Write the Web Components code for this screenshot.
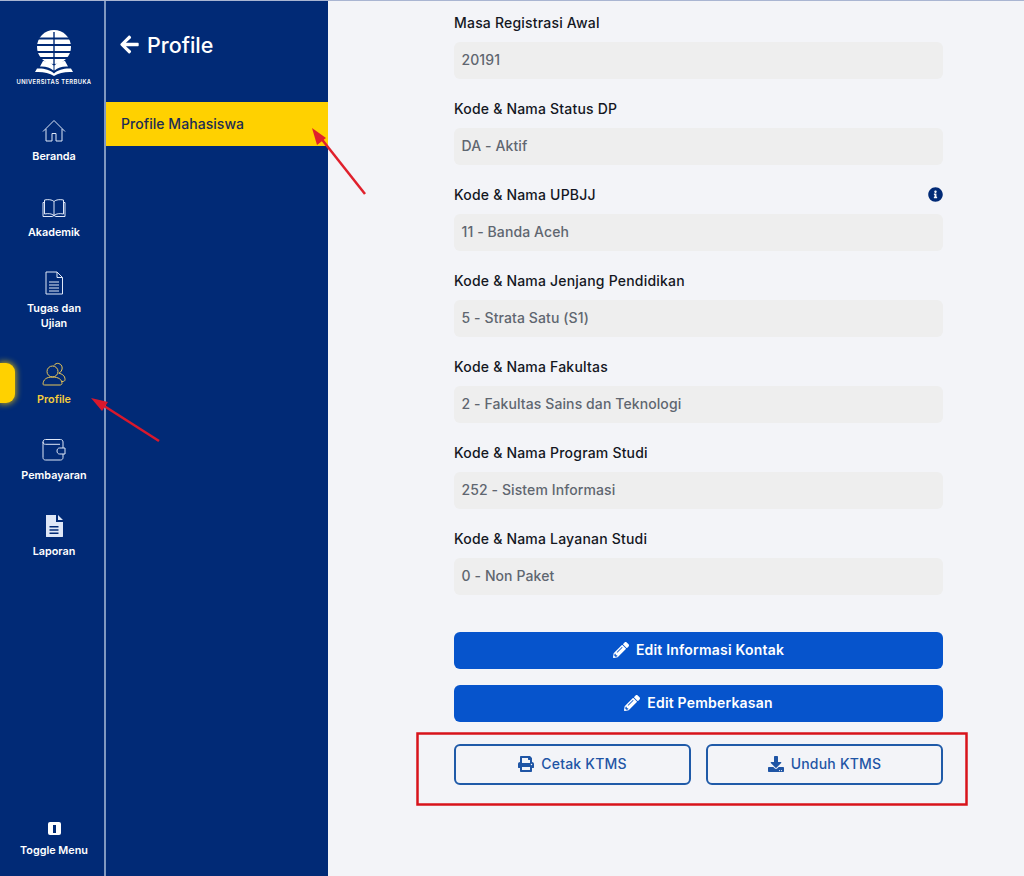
<!doctype html>
<html lang="id">
<head>
<meta charset="utf-8">
<title>Profile Mahasiswa</title>
<style>
  html, body { margin: 0; height: 100%; overflow: hidden; }
  body { font-family: Inter, "Liberation Sans", sans-serif; }
</style>
</head>
<body>
<ut-app>
  <ut-sidebar slot="sidebar">
    <ut-nav-item label="Beranda"><svg viewBox="0 0 24 24" fill="none" stroke="currentColor" stroke-width="1"><path d="M1 12.500 12 1.500l11 11M4 10v12h6v-7.500M14 14.500V22h6V10M10 14.500h4"/></svg></ut-nav-item>
    <ut-nav-item label="Akademik"><svg viewBox="0 0 24 24" fill="none" stroke="currentColor" stroke-width="1"><path d="M12 6.500C10 4.500 6 4.300 2.500 5v14c3.500-.7 7.500-.5 9.500 1.500 2-2 6-2.200 9.500-1.500V5C18 4.300 14 4.500 12 6.500zM12 6.500v14M2.500 7.500H1v14h9l2-1 2 1h9v-14h-1.500"/></svg></ut-nav-item>
    <ut-nav-item label="Tugas dan Ujian"><svg viewBox="0 0 24 24" fill="none" stroke="currentColor" stroke-width="1"><path d="M4 1h11l5.500 5.500V23H4zM15 1v5.500h5.500M7 11h10M7 14h10M7 17h10M7 20h10"/></svg></ut-nav-item>
    <ut-nav-item label="Profile" active><svg viewBox="0 0 24 24" fill="none" stroke="currentColor" stroke-width="1"><circle cx="10.500" cy="9.500" r="5.500"/><path d="M1 22.500c0-5 3.500-7.500 9.500-7.500s9.500 2.500 9.500 6.500c0 1-1 1.500-2 1.500H3c-1 0-2-.3-2-.5zM12 3.500c1-1.700 3-2.500 4.800-2 3 .8 4 4 3 6.500-.5 1.500-1.500 2.500-3 3.200 3.500.8 6.200 2.500 6.200 6.300 0 1.500-1 2-3 2"/></svg></ut-nav-item>
    <ut-nav-item label="Pembayaran"><svg viewBox="0 0 24 24" fill="none" stroke="currentColor" stroke-width="1"><path d="M21 10V4C21 2.500 20 1.500 18.500 1.500H3.500C2 1.500 1 2.500 1 4v15.500C1 21 2 22 3.500 22h15c1.500 0 2.500-1 2.500-2.500V16M1 4c0 1.500 1 2.300 2.500 2.300H18M17.500 10H23v6h-5.500c-1.500 0-2.500-1.300-2.500-3s1-3 2.500-3z"/></svg></ut-nav-item>
    <ut-nav-item label="Laporan"><svg viewBox="0 0 24 24" fill="currentColor"><path fill-rule="evenodd" d="M4 1h10v7h7v14.500c0 .3-.2.500-.5.500h-16a.5.5 0 0 1-.5-.5zM16 1l5 5h-5zM7.500 12v1.500h9V12zm0 3.200v1.500h9v-1.500zm0 3.200v1.500h9v-1.500z"/></svg></ut-nav-item>
  </ut-sidebar>
  <ut-panel slot="panel" heading="Profile">
    <ut-menu-link active>Profile Mahasiswa</ut-menu-link>
  </ut-panel>
  <ut-form-column>
    <ut-field label="Masa Registrasi Awal" value="20191"></ut-field>
    <ut-field label="Kode &amp; Nama Status DP" value="DA - Aktif"></ut-field>
    <ut-field label="Kode &amp; Nama UPBJJ" value="11 - Banda Aceh" info></ut-field>
    <ut-field label="Kode &amp; Nama Jenjang Pendidikan" value="5 - Strata Satu (S1)"></ut-field>
    <ut-field label="Kode &amp; Nama Fakultas" value="2 - Fakultas Sains dan Teknologi"></ut-field>
    <ut-field label="Kode &amp; Nama Program Studi" value="252 - Sistem Informasi"></ut-field>
    <ut-field label="Kode &amp; Nama Layanan Studi" value="0 - Non Paket"></ut-field>
    <ut-actions>
      <ut-button icon="pencil">Edit Informasi Kontak</ut-button>
      <ut-button icon="pencil">Edit Pemberkasan</ut-button>
      <ut-button-row>
        <ut-button icon="print" outline>Cetak KTMS</ut-button>
        <ut-button icon="download" outline>Unduh KTMS</ut-button>
      </ut-button-row>
    </ut-actions>
  </ut-form-column>
  <ut-annotations slot="overlay"></ut-annotations>
</ut-app>

<script>
const html = (strings, ...expressions) => {
  const template = document.createElement('template')
  template.innerHTML = strings.reduce((result, str, i) => result + str + (expressions[i] ?? ''), '')
  return template
}

const NAVY = '#012a76'
const YELLOW = '#ffd100'
const BLUE = '#0654cc'

/** Font Awesome style glyphs used by the buttons and headers. */
const ICONS = {
  pencil: ['0 0 512 512', 'M497.9 142.1l-46.1 46.1c-4.7 4.7-12.3 4.7-17 0l-111-111c-4.7-4.7-4.7-12.3 0-17l46.1-46.1c18.7-18.7 49.1-18.7 67.9 0l60.1 60.1c18.8 18.7 18.8 49.1 0 67.9zM284.2 99.8L21.6 362.4.4 483.9c-2.9 16.4 11.4 30.6 27.8 27.8l121.5-21.3 262.6-262.6c4.7-4.7 4.7-12.3 0-17l-111-111c-4.8-4.7-12.4-4.7-17.1 0zM124.1 339.9c-5.5-5.5-5.5-14.3 0-19.8l154-154c5.5-5.5 14.3-5.5 19.8 0s5.5 14.3 0 19.8l-154 154c-5.5 5.5-14.3 5.5-19.8 0zM88 424h48v36.3l-64.5 11.3-31.1-31.1L51.7 376H88v48z'],
  print: ['0 0 512 512', 'M448 192V77.25c0-8.49-3.37-16.62-9.37-22.63L393.37 9.37c-6-6-14.14-9.37-22.63-9.37H96C78.33 0 64 14.33 64 32v160c-35.35 0-64 28.65-64 64v112c0 8.84 7.16 16 16 16h48v96c0 17.67 14.33 32 32 32h320c17.67 0 32-14.33 32-32v-96h48c8.84 0 16-7.16 16-16V256c0-35.35-28.65-64-64-64zm-64 256H128v-96h256v96zm0-224H128V64h192v48c0 8.84 7.16 16 16 16h48v96zm48 72c-13.25 0-24-10.75-24-24 0-13.26 10.75-24 24-24s24 10.74 24 24c0 13.25-10.75 24-24 24z'],
  download: ['0 0 512 512', 'M216 0h80c13.3 0 24 10.7 24 24v168h87.7c17.8 0 26.7 21.5 14.1 34.1L269.7 378.3c-7.5 7.5-19.8 7.5-27.3 0L90.1 226.1c-12.6-12.6-3.7-34.1 14.1-34.1H192V24c0-13.3 10.7-24 24-24zm296 376v112c0 13.3-10.7 24-24 24H24c-13.3 0-24-10.7-24-24V376c0-13.3 10.7-24 24-24h146.7l49 49c20.1 20.1 52.5 20.1 72.6 0l49-49H488c13.3 0 24 10.7 24 24zm-124 88c0-11-9-20-20-20s-20 9-20 20 9 20 20 20 20-9 20-20zm64 0c0-11-9-20-20-20s-20 9-20 20 9 20 20 20 20-9 20-20z'],
  info: ['0 0 512 512', 'M256 8C119.043 8 8 119.083 8 256c0 136.997 111.043 248 248 248s248-111.003 248-248C504 119.083 392.957 8 256 8zm0 110c23.196 0 42 18.804 42 42s-18.804 42-42 42-42-18.804-42-42 18.804-42 42-42zm56 254c0 6.627-5.373 12-12 12h-88c-6.627 0-12-5.373-12-12v-24c0-6.627 5.373-12 12-12h12v-64h-12c-6.627 0-12-5.373-12-12v-24c0-6.627 5.373-12 12-12h64c6.627 0 12 5.373 12 12v100h12c6.627 0 12 5.373 12 12v24z'],
  back: ['0 0 448 512', 'M257.5 445.1l-22.2 22.2c-9.4 9.4-24.6 9.4-33.9 0L7 273c-9.4-9.4-9.4-24.6 0-33.9L201.4 44.7c9.4-9.4 24.6-9.4 33.9 0l22.2 22.2c9.5 9.5 9.3 25-.4 34.3L136.6 216H424c13.3 0 24 10.7 24 24v32c0 13.3-10.7 24-24 24H136.6l120.5 114.8c9.8 9.3 10 24.8.4 34.3z']
}
const glyph = (name) => `<svg viewBox="${ICONS[name][0]}" fill="currentColor"><path d="${ICONS[name][1]}"/></svg>`

/** Base class: clones a static template into an open shadow root. */
class ShadowElement extends HTMLElement {
  constructor() {
    super()
    this.attachShadow({ mode: 'open' })
    this.shadowRoot.appendChild(this.constructor.template.content.cloneNode(true))
  }
}

class UtApp extends ShadowElement {
  static template = html`
    <style>
      :host {
        display: flex;
        position: relative;
        box-sizing: border-box;
        width: 1024px;
        height: 876px;
        border-top: 1px solid #a9b5d2;
        background: #f3f4f8;
        overflow: hidden;
      }
      main { flex: 1; min-width: 0; }
    </style>
    <slot name="sidebar"></slot>
    <slot name="panel"></slot>
    <main><slot></slot></main>
    <slot name="overlay"></slot>
  `
}

class UtSidebar extends ShadowElement {
  static template = html`
    <style>
      :host {
        display: flex;
        flex-direction: column;
        box-sizing: border-box;
        flex: none;
        width: 106px;
        padding: 29px 0 0 4px;
        background: ${NAVY};
        border-right: 2px solid #7f97c0;
        color: #fff;
      }
      .logo {
        display: flex;
        flex-direction: column;
        align-items: center;
        gap: 2px;
        margin-bottom: 33px;
      }
      .logo svg { width: 40px; height: 46px; display: block; }
      .logo span { font-size: 5.8px; font-weight: 600; letter-spacing: .4px; white-space: nowrap; line-height: 8px; }
      nav { display: flex; flex-direction: column; gap: 31px; flex: 1; }
      .toggle {
        display: flex;
        flex-direction: column;
        align-items: center;
        gap: 8px;
        padding-bottom: 18px;
        font-size: 10.800px;
        font-weight: 600;
        line-height: 15px;
      }
      .toggle i {
        display: flex;
        justify-content: center;
        align-items: center;
        width: 13px;
        height: 13px;
        border-radius: 2px;
        background: #fff;
      }
      .toggle i::after { content: ''; width: 3px; height: 8px; background: ${NAVY}; }
    </style>
    <div class="logo">
      <svg viewBox="0 0 40 46">
        <defs><clipPath id="globe"><circle cx="20" cy="17" r="17"/></clipPath></defs>
        <g clip-path="url(#globe)" fill="#fff">
          <rect x="0" y="0" width="40" height="7.500"/>
          <rect x="0" y="9.500" width="40" height="4.500"/>
          <rect x="0" y="16" width="40" height="5"/>
          <rect x="0" y="23" width="40" height="4"/>
          <rect x="0" y="29" width="40" height="5"/>
        </g>
        <rect x="19.300" y="2" width="1.400" height="34" fill="${NAVY}"/>
        <path d="M9 31c4 0 8 1.500 10.500 4.500v5C16 37.500 11 36 6 36.500zM31 31c-4 0-8 1.500-10.500 4.500v5C24 37.500 29 36 34 36.500z" fill="#fff"/>
        <path d="M3 38.500c6-.5 13 1 17 5 4-4 11-5.500 17-5l2 3.500c-7-.5-14 .5-19 4-5-3.500-12-4.500-19-4z" fill="#fff"/>
      </svg>
      <span>UNIVERSITAS TERBUKA</span>
    </div>
    <nav><slot></slot></nav>
    <div class="toggle"><i></i><span>Toggle Menu</span></div>
  `
}

class UtNavItem extends ShadowElement {
  static template = html`
    <style>
      :host {
        display: flex;
        flex-direction: column;
        align-items: center;
        position: relative;
        gap: 6px;
        color: #fff;
        font-size: 10.800px;
        font-weight: 600;
        line-height: 15px;
        text-align: center;
      }
      :host([active]) { color: #f5cd3c; }
      .icon { display: block; height: 24px; color: #dfe7f7; }
      :host([active]) .icon { color: #e8c658; }
      ::slotted(svg) { width: 24px; height: 24px; display: block; }
      .label { width: 70px; }
      .pill {
        display: none;
        position: absolute;
        left: -4px;
        top: 1px;
        width: 15px;
        height: 40px;
        background: ${YELLOW};
        border-radius: 0 9px 9px 0;
        box-shadow: 0 0 6px 1px rgba(255, 209, 0, .75);
      }
      :host([active]) .pill { display: block; }
    </style>
    <span class="pill"></span>
    <span class="icon"><slot></slot></span>
    <span class="label"></span>
  `

  connectedCallback() {
    this.shadowRoot.querySelector('.label').textContent = this.getAttribute('label')
  }
}

class UtPanel extends ShadowElement {
  static template = html`
    <style>
      :host {
        display: block;
        flex: none;
        width: 222px;
        background: ${NAVY};
        color: #fff;
      }
      h1 {
        display: flex;
        align-items: center;
        gap: 8px;
        box-sizing: border-box;
        height: 101px;
        margin: 0;
        padding: 0 0 14px 14px;
        font-size: 21.500px;
        font-weight: 500;
      }
      h1 svg { width: 19px; height: 21px; }
    </style>
    <h1>${glyph('back')}<span></span></h1>
    <slot></slot>
  `

  connectedCallback() {
    this.shadowRoot.querySelector('span').textContent = this.getAttribute('heading')
  }
}

class UtMenuLink extends ShadowElement {
  static template = html`
    <style>
      :host {
        display: flex;
        align-items: center;
        box-sizing: border-box;
        height: 44px;
        padding: 0 15px 2px;
        font-size: 14px;
        font-weight: 500;
        letter-spacing: .05px;
      }
      :host([active]) { background: ${YELLOW}; color: #1b2c55; }
    </style>
    <slot></slot>
  `
}

class UtFormColumn extends ShadowElement {
  static template = html`
    <style>
      :host {
        display: flex;
        flex-direction: column;
        gap: 19px;
        width: 489px;
        margin-left: 126px;
        padding-top: 11px;
      }
    </style>
    <slot></slot>
  `
}

class UtField extends ShadowElement {
  static template = html`
    <style>
      :host { display: block; }
      .label {
        display: flex;
        justify-content: space-between;
        align-items: center;
        height: 20px;
        margin-bottom: 10px;
        color: #14171f;
        font-size: 14px;
        font-weight: 500;
        letter-spacing: .2px;
      }
      .label svg { width: 15px; height: 15px; color: ${NAVY}; display: none; }
      :host([info]) .label svg { display: block; }
      .value {
        box-sizing: border-box;
        height: 37px;
        padding: 0 7.500px;
        border-radius: 6px;
        background: #eeeeee;
        color: #5f6670;
        font-size: 14px;
        font-weight: 500;
        letter-spacing: .1px;
        line-height: 35px;
      }
    </style>
    <div class="label"><span></span>${glyph('info')}</div>
    <div class="value"></div>
  `

  connectedCallback() {
    this.shadowRoot.querySelector('.label span').textContent = this.getAttribute('label')
    this.shadowRoot.querySelector('.value').textContent = this.getAttribute('value')
  }
}

class UtActions extends ShadowElement {
  static template = html`
    <style>
      :host {
        display: flex;
        flex-direction: column;
        gap: 16px;
        margin-top: 18px;
      }
      ::slotted(ut-button-row) { margin-top: 6px; }
    </style>
    <slot></slot>
  `
}

class UtButtonRow extends ShadowElement {
  static template = html`
    <style>
      :host { display: grid; grid-template-columns: 1fr 1fr; gap: 15px; }
    </style>
    <slot></slot>
  `
}

class UtButton extends ShadowElement {
  static template = html`
    <style>
      :host {
        display: flex;
        justify-content: center;
        align-items: center;
        gap: 7px;
        box-sizing: border-box;
        height: 37px;
        padding-bottom: 2px;
        border-radius: 6px;
        background: ${BLUE};
        color: #fff;
        font-size: 14px;
        font-weight: 600;
        letter-spacing: .2px;
      }
      :host([outline]) {
        height: 41px;
        padding-bottom: 2px;
        border: 2px solid #1f5aa8;
        background: transparent;
        color: #1f55a5;
        font-weight: 500;
      }
      .icon { display: flex; }
      .icon svg { width: 16px; height: 16px; }
    </style>
    <span class="icon"></span>
    <slot></slot>
  `

  connectedCallback() {
    this.shadowRoot.querySelector('.icon').innerHTML = glyph(this.getAttribute('icon'))
  }
}

/** Red markup drawn over the screenshot: a box and two arrows. */
class UtAnnotations extends ShadowElement {
  static template = html`
    <style>
      :host {
        display: block;
        position: absolute;
        inset: -1px 0 0 0;
        pointer-events: none;
      }
      svg { display: block; }
    </style>
    <svg width="1024" height="876" viewBox="0 0 1024 876">
      <rect x="417.500" y="733.500" width="549" height="71" fill="none" stroke="#d8131b" stroke-width="2.500"/>
      <path d="M365 194 320 137" stroke="#e0202c" stroke-width="2.500" fill="none"/>
      <path d="M312 128 326 138 317 145z" fill="#e0202c"/>
      <path d="M159 441 101 404" stroke="#d9182c" stroke-width="2.500" fill="none"/>
      <path d="M91 398 108 402 102 411z" fill="#d9182c"/>
    </svg>
  `
}

customElements.define('ut-app', UtApp)
customElements.define('ut-sidebar', UtSidebar)
customElements.define('ut-nav-item', UtNavItem)
customElements.define('ut-panel', UtPanel)
customElements.define('ut-menu-link', UtMenuLink)
customElements.define('ut-form-column', UtFormColumn)
customElements.define('ut-field', UtField)
customElements.define('ut-actions', UtActions)
customElements.define('ut-button-row', UtButtonRow)
customElements.define('ut-button', UtButton)
customElements.define('ut-annotations', UtAnnotations)
</script>
</body>
</html>
